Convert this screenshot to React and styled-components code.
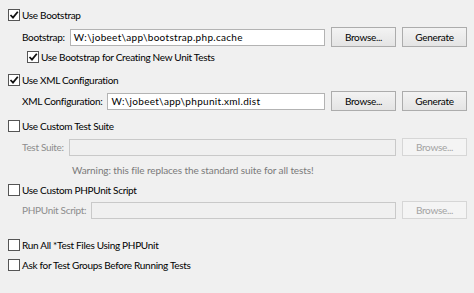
import React from 'react'
import styled, { createGlobalStyle } from 'styled-components'

const GlobalStyle = createGlobalStyle`
    html, body {
        margin: 0;
        padding: 0;
        background: #f0f0f0;
    }
    body {
        font-family: Lato, "Liberation Sans", sans-serif;
        font-size: 10px;
        letter-spacing: -0.3px;
        color: #000;
    }
`

function Check({ checked, label, indent, mt }) {
    return (
        <CheckRow $indent={indent} $mt={mt}>
            <Box>
                {checked && (
                    <svg width="10" height="10" viewBox="0 0 10 10">
                        <path d="M1.5 5 L4 7.6 L8.8 1.8" fill="none" stroke="#111" strokeWidth="1.8" />
                    </svg>
                )}
            </Box>
            <span>{label}</span>
        </CheckRow>
    )
}

function Field({ label, value, disabled, generate, mt }) {
    return (
        <FieldRow $mt={mt}>
            <FieldLabel $disabled={disabled}>{label}</FieldLabel>
            <Input $disabled={disabled}>{value}</Input>
            <Button $disabled={disabled}>Browse...</Button>
            {generate && <Button>Generate</Button>}
        </FieldRow>
    )
}

function App() {
    return (
        <Panel>
            <GlobalStyle />
            <Check checked label="Use Bootstrap" />
            <Field label="Bootstrap:" value="W:\jobeet\app\bootstrap.php.cache" generate mt={2} />
            <Check checked indent label="Use Bootstrap for Creating New Unit Tests" />
            <Check checked label="Use XML Configuration" mt={3} />
            <Field label="XML Configuration:" value="W:\jobeet\app\phpunit.xml.dist" generate mt={1} />
            <Check label="Use Custom Test Suite" mt={5} />
            <Field label="Test Suite:" disabled mt={1} />
            <Warning>Warning: this file replaces the standard suite for all tests!</Warning>
            <Check label="Use Custom PHPUnit Script" />
            <Field label="PHPUnit Script:" disabled />
            <Check label="Run All *Test Files Using PHPUnit" mt={15} />
            <Check label="Ask for Test Groups Before Running Tests" />
        </Panel>
    )
}

export default App

const Panel = styled.div`
    width: 474px;
    height: 293px;
    box-sizing: border-box;
    padding: 5px 7px 0 8px;
    display: flex;
    flex-direction: column;
`

const CheckRow = styled.div`
    display: flex;
    align-items: center;
    height: 20px;
    margin-top: ${p => p.$mt || 0}px;
    padding-left: ${p => (p.$indent ? 19 : 0)}px;
    white-space: nowrap;
`

const Box = styled.div`
    width: 10px;
    height: 10px;
    border: 1px solid #555;
    background: #fff;
    margin-right: 2px;
    display: flex;
    align-items: center;
    justify-content: center;
    svg {
        display: block;
    }
`

const FieldRow = styled.div`
    display: flex;
    align-items: center;
    height: 20px;
    margin-top: ${p => p.$mt || 0}px;
    padding-left: 14px;
`

const FieldLabel = styled.span`
    color: ${p => (p.$disabled ? '#8d8d8d' : '#000')};
    margin-right: 5px;
    white-space: nowrap;
`

const Input = styled.div`
    flex: 1;
    height: 17px;
    box-sizing: border-box;
    border: 1px solid ${p => (p.$disabled ? '#c9c9c9' : '#b3b3b3')};
    background: ${p => (p.$disabled ? '#f0f0f0' : '#fff')};
    padding: 0 3px;
    line-height: 15px;
    letter-spacing: 0.3px;
    white-space: nowrap;
    overflow: hidden;
`

const Button = styled.div`
    width: 65px;
    height: ${p => (p.$disabled ? 18 : 20)}px;
    box-sizing: border-box;
    margin-left: 6px;
    border: 1px solid ${p => (p.$disabled ? '#d6d6d6' : '#acacac')};
    background: ${p => (p.$disabled ? '#f4f4f4' : 'linear-gradient(#f3f3f3, #e4e4e4)')};
    color: ${p => (p.$disabled ? '#a3a3a3' : '#000')};
    display: flex;
    align-items: center;
    justify-content: center;
`

const Warning = styled.div`
    height: 20px;
    margin-top: 3px;
    line-height: 20px;
    padding-left: 64px;
    color: #7a7a7a;
    letter-spacing: -0.1px;
    white-space: nowrap;
`
